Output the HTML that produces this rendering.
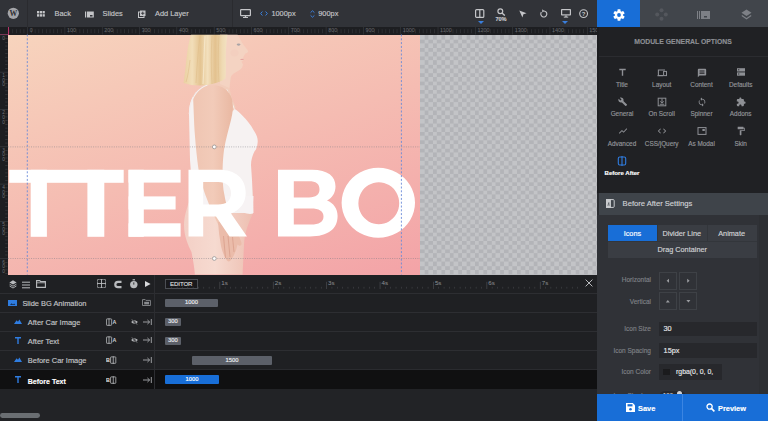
<!DOCTYPE html>
<html><head><meta charset="utf-8">
<style>
*{margin:0;padding:0;box-sizing:border-box}
html,body{width:768px;height:421px;overflow:hidden;background:#222326;font-family:"Liberation Sans",sans-serif;}
.a{position:absolute;display:block}
.t{position:absolute;white-space:nowrap;line-height:1;-webkit-text-stroke:0.15px currentColor}
</style></head><body>
<div class="a" style="left:0px;top:0px;width:597px;height:27px;background:#313338;"></div>
<div class="a" style="left:27px;top:0px;width:1px;height:27px;background:#2a2b2f;"></div>
<div class="a" style="left:232px;top:0px;width:1px;height:27px;background:#2a2b2f;"></div>
<svg class="a" style="left:7px;top:7px" width="13" height="13" viewBox="0 0 13 13">
<circle cx="6.3" cy="6.3" r="5.6" fill="#a4a5a9"/>
<text x="6.3" y="9.4" font-family="Liberation Serif" font-weight="700" font-size="8.6" fill="#2e2f33" text-anchor="middle" transform="translate(6.3 0) scale(0.9 1) translate(-6.3 0)">W</text></svg>
<svg class="a" style="left:37px;top:11px" width="8" height="6" viewBox="0 0 8 6" fill="#c4c5c8">
<rect x="0" y="0" width="2.2" height="2.4"/><rect x="2.8" y="0" width="2.2" height="2.4"/><rect x="5.6" y="0" width="2.2" height="2.4"/>
<rect x="0" y="3.2" width="2.2" height="2.4"/><rect x="2.8" y="3.2" width="2.2" height="2.4"/><rect x="5.6" y="3.2" width="2.2" height="2.4"/></svg>
<div class="t" style="left:54.5px;top:9.94px;font-size:7.4px;color:#c4c5c8;font-weight:400;">Back</div>
<svg class="a" style="left:84.5px;top:10.5px" width="9" height="7" viewBox="0 0 9 7" fill="#c4c5c8">
<rect x="0" y="0.5" width="1" height="6"/><rect x="1.8" y="0.5" width="7" height="6"/><rect x="5" y="4" width="2.5" height="1.5" fill="#313338"/></svg>
<div class="t" style="left:102.6px;top:9.94px;font-size:7.4px;color:#c4c5c8;font-weight:400;">Slides</div>
<svg class="a" style="left:137.5px;top:9.5px" width="8" height="8" viewBox="0 0 8 8">
<rect x="0.5" y="2" width="5.5" height="5.5" fill="none" stroke="#c4c5c8" stroke-width="1"/>
<rect x="2" y="0.5" width="5.5" height="5.5" fill="#c4c5c8"/>
<path d="M4.75 1.6v3.3M3.1 3.25h3.3" stroke="#313338" stroke-width="0.9"/></svg>
<div class="t" style="left:155px;top:9.94px;font-size:7.4px;color:#c4c5c8;font-weight:400;">Add Layer</div>
<svg class="a" style="left:240px;top:9px" width="11" height="9" viewBox="0 0 11 9">
<rect x="0.6" y="0.6" width="9.8" height="6" rx="0.6" fill="none" stroke="#c4c5c8" stroke-width="1.2"/>
<rect x="4.8" y="6.6" width="1.4" height="1.6" fill="#c4c5c8"/><rect x="3" y="8" width="5" height="1" fill="#c4c5c8"/></svg>
<svg class="a" style="left:260px;top:11.2px" width="8" height="5" viewBox="0 0 8 5">
<path d="M2.4 0.5L0.7 2.5l1.7 2M5.6 0.5L7.3 2.5l-1.7 2" fill="none" stroke="#3a7fdc" stroke-width="1"/></svg>
<div class="t" style="left:271.4px;top:9.94px;font-size:7.4px;color:#c4c5c8;font-weight:400;">1000px</div>
<svg class="a" style="left:310px;top:9.5px" width="5" height="8" viewBox="0 0 5 8">
<path d="M0.6 2.6L2.5 0.8l1.9 1.8M0.6 5.4L2.5 7.2l1.9-1.8" fill="none" stroke="#3a7fdc" stroke-width="1"/></svg>
<div class="t" style="left:318.2px;top:9.94px;font-size:7.4px;color:#c4c5c8;font-weight:400;">900px</div>
<svg class="a" style="left:475px;top:9px" width="10" height="9" viewBox="0 0 10 9">
<rect x="0.6" y="0.6" width="8.2" height="7.8" rx="1" fill="none" stroke="#c4c5c8" stroke-width="1.2"/>
<rect x="4.2" y="0" width="1.2" height="9" fill="#c4c5c8"/></svg>
<svg class="a" style="left:478px;top:21px" width="6" height="3" viewBox="0 0 6 3"><path d="M0 0h6L3 3z" fill="#3a7fdc"/></svg>
<svg class="a" style="left:497px;top:7.5px" width="9" height="8" viewBox="0 0 9 8">
<circle cx="3.3" cy="3.3" r="2.4" fill="none" stroke="#c4c5c8" stroke-width="1.2"/><path d="M5 5l2.8 2.6" stroke="#c4c5c8" stroke-width="1.4"/></svg>
<div class="t" style="left:501px;transform:translateX(-50%);top:16.86px;font-size:5.6px;color:#c4c5c8;font-weight:700;">70%</div>
<svg class="a" style="left:519px;top:10px" width="8" height="8" viewBox="0 0 8 8"><path d="M0.3 0.5L7.6 3.3 4.4 4.3 3.4 7.6z" fill="#c4c5c8"/></svg>
<svg class="a" style="left:540px;top:9px" width="8" height="9" viewBox="0 0 8 9">
<path d="M1.4 3.2A3 3 0 1 0 3.9 2" fill="none" stroke="#c4c5c8" stroke-width="1.1"/><path d="M2.2 0.3L4.4 2 2.3 3.6z" fill="#c4c5c8"/></svg>
<svg class="a" style="left:560.5px;top:9px" width="10" height="9" viewBox="0 0 10 9">
<rect x="0" y="0" width="10" height="6.5" rx="0.8" fill="#c4c5c8"/><rect x="1.2" y="1.2" width="7.6" height="4.1" fill="#313338"/>
<rect x="4.3" y="6.5" width="1.4" height="1.4" fill="#c4c5c8"/><rect x="2.8" y="7.6" width="4.4" height="1" fill="#c4c5c8"/></svg>
<svg class="a" style="left:562px;top:21px" width="6" height="3" viewBox="0 0 6 3"><path d="M0 0h6L3 3z" fill="#3a7fdc"/></svg>
<svg class="a" style="left:579px;top:8.5px" width="10" height="10" viewBox="0 0 10 10">
<circle cx="4.6" cy="4.6" r="3.9" fill="none" stroke="#c4c5c8" stroke-width="1.1"/>
<text x="4.6" y="6.9" font-family="Liberation Sans" font-weight="700" font-size="6" fill="#c4c5c8" text-anchor="middle">?</text></svg>
<div class="a" style="left:597px;top:0px;width:43px;height:27px;background:#186ed7;"></div>
<div class="a" style="left:640px;top:0px;width:128px;height:27px;background:#41454b;"></div>
<svg class="a" style="left:612.5px;top:8.6px" width="12" height="12" viewBox="-6 -6 12 12">
<g fill="#fff"><rect x="-1.5" y="-5.7" width="3" height="3" rx="0.4" transform="rotate(0)"/><rect x="-1.5" y="-5.7" width="3" height="3" rx="0.4" transform="rotate(60)"/><rect x="-1.5" y="-5.7" width="3" height="3" rx="0.4" transform="rotate(120)"/><rect x="-1.5" y="-5.7" width="3" height="3" rx="0.4" transform="rotate(180)"/><rect x="-1.5" y="-5.7" width="3" height="3" rx="0.4" transform="rotate(240)"/><rect x="-1.5" y="-5.7" width="3" height="3" rx="0.4" transform="rotate(300)"/>
<circle r="4.1"/></g><circle r="1.9" fill="#186ed7"/></svg>
<svg class="a" style="left:655px;top:8px" width="13" height="13" viewBox="0 0 13 13" fill="#54575d">
<circle cx="6.5" cy="2.2" r="2"/><circle cx="6.5" cy="10.8" r="2"/><circle cx="2.2" cy="6.5" r="2"/><circle cx="10.8" cy="6.5" r="2"/></svg>
<svg class="a" style="left:697px;top:10.5px" width="13" height="8" viewBox="0 0 13 8" fill="#7d8086">
<rect x="0" y="0" width="1" height="8"/><rect x="2" y="0" width="1" height="8"/><rect x="4" y="0" width="9" height="8"/>
<rect x="7" y="5" width="3" height="1.5" fill="#41454b"/></svg>
<svg class="a" style="left:741px;top:8.5px" width="11" height="12" viewBox="0 0 11 12">
<path d="M5.5 0.5L10.5 3.8 5.5 7.1 0.5 3.8z" fill="#7d8086"/><path d="M0.8 6.6L5.5 9.7 10.2 6.6" fill="none" stroke="#7d8086" stroke-width="1.2"/></svg>
<div class="a" style="left:0px;top:27px;width:597px;height:7.5px;background:#1d1e21;"></div>
<svg class="a" style="left:0;top:27px" width="597" height="8" viewBox="0 0 597 8"><rect x="8.64" y="2.2" width="0.7" height="4" fill="#35373b"/><rect x="12.38" y="2.2" width="0.7" height="4" fill="#35373b"/><rect x="16.11" y="2.2" width="0.7" height="4" fill="#35373b"/><rect x="19.84" y="2.2" width="0.7" height="4" fill="#35373b"/><rect x="23.57" y="2.2" width="0.7" height="4" fill="#35373b"/><rect x="27.30" y="0" width="0.6" height="7.5" fill="#3a3c40"/><rect x="31.03" y="2.2" width="0.7" height="4" fill="#35373b"/><rect x="34.76" y="2.2" width="0.7" height="4" fill="#35373b"/><rect x="38.49" y="2.2" width="0.7" height="4" fill="#35373b"/><rect x="42.22" y="2.2" width="0.7" height="4" fill="#35373b"/><rect x="45.95" y="2.2" width="0.7" height="4" fill="#35373b"/><rect x="49.69" y="2.2" width="0.7" height="4" fill="#35373b"/><rect x="53.42" y="2.2" width="0.7" height="4" fill="#35373b"/><rect x="57.15" y="2.2" width="0.7" height="4" fill="#35373b"/><rect x="60.88" y="2.2" width="0.7" height="4" fill="#35373b"/><rect x="64.61" y="0" width="0.6" height="7.5" fill="#3a3c40"/><rect x="68.34" y="2.2" width="0.7" height="4" fill="#35373b"/><rect x="72.07" y="2.2" width="0.7" height="4" fill="#35373b"/><rect x="75.80" y="2.2" width="0.7" height="4" fill="#35373b"/><rect x="79.53" y="2.2" width="0.7" height="4" fill="#35373b"/><rect x="83.27" y="2.2" width="0.7" height="4" fill="#35373b"/><rect x="87.00" y="2.2" width="0.7" height="4" fill="#35373b"/><rect x="90.73" y="2.2" width="0.7" height="4" fill="#35373b"/><rect x="94.46" y="2.2" width="0.7" height="4" fill="#35373b"/><rect x="98.19" y="2.2" width="0.7" height="4" fill="#35373b"/><rect x="101.92" y="0" width="0.6" height="7.5" fill="#3a3c40"/><rect x="105.65" y="2.2" width="0.7" height="4" fill="#35373b"/><rect x="109.38" y="2.2" width="0.7" height="4" fill="#35373b"/><rect x="113.11" y="2.2" width="0.7" height="4" fill="#35373b"/><rect x="116.84" y="2.2" width="0.7" height="4" fill="#35373b"/><rect x="120.57" y="2.2" width="0.7" height="4" fill="#35373b"/><rect x="124.31" y="2.2" width="0.7" height="4" fill="#35373b"/><rect x="128.04" y="2.2" width="0.7" height="4" fill="#35373b"/><rect x="131.77" y="2.2" width="0.7" height="4" fill="#35373b"/><rect x="135.50" y="2.2" width="0.7" height="4" fill="#35373b"/><rect x="139.23" y="0" width="0.6" height="7.5" fill="#3a3c40"/><rect x="142.96" y="2.2" width="0.7" height="4" fill="#35373b"/><rect x="146.69" y="2.2" width="0.7" height="4" fill="#35373b"/><rect x="150.42" y="2.2" width="0.7" height="4" fill="#35373b"/><rect x="154.15" y="2.2" width="0.7" height="4" fill="#35373b"/><rect x="157.89" y="2.2" width="0.7" height="4" fill="#35373b"/><rect x="161.62" y="2.2" width="0.7" height="4" fill="#35373b"/><rect x="165.35" y="2.2" width="0.7" height="4" fill="#35373b"/><rect x="169.08" y="2.2" width="0.7" height="4" fill="#35373b"/><rect x="172.81" y="2.2" width="0.7" height="4" fill="#35373b"/><rect x="176.54" y="0" width="0.6" height="7.5" fill="#3a3c40"/><rect x="180.27" y="2.2" width="0.7" height="4" fill="#35373b"/><rect x="184.00" y="2.2" width="0.7" height="4" fill="#35373b"/><rect x="187.73" y="2.2" width="0.7" height="4" fill="#35373b"/><rect x="191.46" y="2.2" width="0.7" height="4" fill="#35373b"/><rect x="195.19" y="2.2" width="0.7" height="4" fill="#35373b"/><rect x="198.93" y="2.2" width="0.7" height="4" fill="#35373b"/><rect x="202.66" y="2.2" width="0.7" height="4" fill="#35373b"/><rect x="206.39" y="2.2" width="0.7" height="4" fill="#35373b"/><rect x="210.12" y="2.2" width="0.7" height="4" fill="#35373b"/><rect x="213.85" y="0" width="0.6" height="7.5" fill="#3a3c40"/><rect x="217.58" y="2.2" width="0.7" height="4" fill="#35373b"/><rect x="221.31" y="2.2" width="0.7" height="4" fill="#35373b"/><rect x="225.04" y="2.2" width="0.7" height="4" fill="#35373b"/><rect x="228.77" y="2.2" width="0.7" height="4" fill="#35373b"/><rect x="232.50" y="2.2" width="0.7" height="4" fill="#35373b"/><rect x="236.24" y="2.2" width="0.7" height="4" fill="#35373b"/><rect x="239.97" y="2.2" width="0.7" height="4" fill="#35373b"/><rect x="243.70" y="2.2" width="0.7" height="4" fill="#35373b"/><rect x="247.43" y="2.2" width="0.7" height="4" fill="#35373b"/><rect x="251.16" y="0" width="0.6" height="7.5" fill="#3a3c40"/><rect x="254.89" y="2.2" width="0.7" height="4" fill="#35373b"/><rect x="258.62" y="2.2" width="0.7" height="4" fill="#35373b"/><rect x="262.35" y="2.2" width="0.7" height="4" fill="#35373b"/><rect x="266.08" y="2.2" width="0.7" height="4" fill="#35373b"/><rect x="269.81" y="2.2" width="0.7" height="4" fill="#35373b"/><rect x="273.55" y="2.2" width="0.7" height="4" fill="#35373b"/><rect x="277.28" y="2.2" width="0.7" height="4" fill="#35373b"/><rect x="281.01" y="2.2" width="0.7" height="4" fill="#35373b"/><rect x="284.74" y="2.2" width="0.7" height="4" fill="#35373b"/><rect x="288.47" y="0" width="0.6" height="7.5" fill="#3a3c40"/><rect x="292.20" y="2.2" width="0.7" height="4" fill="#35373b"/><rect x="295.93" y="2.2" width="0.7" height="4" fill="#35373b"/><rect x="299.66" y="2.2" width="0.7" height="4" fill="#35373b"/><rect x="303.39" y="2.2" width="0.7" height="4" fill="#35373b"/><rect x="307.12" y="2.2" width="0.7" height="4" fill="#35373b"/><rect x="310.86" y="2.2" width="0.7" height="4" fill="#35373b"/><rect x="314.59" y="2.2" width="0.7" height="4" fill="#35373b"/><rect x="318.32" y="2.2" width="0.7" height="4" fill="#35373b"/><rect x="322.05" y="2.2" width="0.7" height="4" fill="#35373b"/><rect x="325.78" y="0" width="0.6" height="7.5" fill="#3a3c40"/><rect x="329.51" y="2.2" width="0.7" height="4" fill="#35373b"/><rect x="333.24" y="2.2" width="0.7" height="4" fill="#35373b"/><rect x="336.97" y="2.2" width="0.7" height="4" fill="#35373b"/><rect x="340.70" y="2.2" width="0.7" height="4" fill="#35373b"/><rect x="344.44" y="2.2" width="0.7" height="4" fill="#35373b"/><rect x="348.17" y="2.2" width="0.7" height="4" fill="#35373b"/><rect x="351.90" y="2.2" width="0.7" height="4" fill="#35373b"/><rect x="355.63" y="2.2" width="0.7" height="4" fill="#35373b"/><rect x="359.36" y="2.2" width="0.7" height="4" fill="#35373b"/><rect x="363.09" y="0" width="0.6" height="7.5" fill="#3a3c40"/><rect x="366.82" y="2.2" width="0.7" height="4" fill="#35373b"/><rect x="370.55" y="2.2" width="0.7" height="4" fill="#35373b"/><rect x="374.28" y="2.2" width="0.7" height="4" fill="#35373b"/><rect x="378.01" y="2.2" width="0.7" height="4" fill="#35373b"/><rect x="381.75" y="2.2" width="0.7" height="4" fill="#35373b"/><rect x="385.48" y="2.2" width="0.7" height="4" fill="#35373b"/><rect x="389.21" y="2.2" width="0.7" height="4" fill="#35373b"/><rect x="392.94" y="2.2" width="0.7" height="4" fill="#35373b"/><rect x="396.67" y="2.2" width="0.7" height="4" fill="#35373b"/><rect x="400.40" y="0" width="0.6" height="7.5" fill="#3a3c40"/><rect x="404.13" y="2.2" width="0.7" height="4" fill="#35373b"/><rect x="407.86" y="2.2" width="0.7" height="4" fill="#35373b"/><rect x="411.59" y="2.2" width="0.7" height="4" fill="#35373b"/><rect x="415.32" y="2.2" width="0.7" height="4" fill="#35373b"/><rect x="419.06" y="2.2" width="0.7" height="4" fill="#35373b"/><rect x="422.79" y="2.2" width="0.7" height="4" fill="#35373b"/><rect x="426.52" y="2.2" width="0.7" height="4" fill="#35373b"/><rect x="430.25" y="2.2" width="0.7" height="4" fill="#35373b"/><rect x="433.98" y="2.2" width="0.7" height="4" fill="#35373b"/><rect x="437.71" y="0" width="0.6" height="7.5" fill="#3a3c40"/><rect x="441.44" y="2.2" width="0.7" height="4" fill="#35373b"/><rect x="445.17" y="2.2" width="0.7" height="4" fill="#35373b"/><rect x="448.90" y="2.2" width="0.7" height="4" fill="#35373b"/><rect x="452.63" y="2.2" width="0.7" height="4" fill="#35373b"/><rect x="456.37" y="2.2" width="0.7" height="4" fill="#35373b"/><rect x="460.10" y="2.2" width="0.7" height="4" fill="#35373b"/><rect x="463.83" y="2.2" width="0.7" height="4" fill="#35373b"/><rect x="467.56" y="2.2" width="0.7" height="4" fill="#35373b"/><rect x="471.29" y="2.2" width="0.7" height="4" fill="#35373b"/><rect x="475.02" y="0" width="0.6" height="7.5" fill="#3a3c40"/><rect x="478.75" y="2.2" width="0.7" height="4" fill="#35373b"/><rect x="482.48" y="2.2" width="0.7" height="4" fill="#35373b"/><rect x="486.21" y="2.2" width="0.7" height="4" fill="#35373b"/><rect x="489.94" y="2.2" width="0.7" height="4" fill="#35373b"/><rect x="493.68" y="2.2" width="0.7" height="4" fill="#35373b"/><rect x="497.41" y="2.2" width="0.7" height="4" fill="#35373b"/><rect x="501.14" y="2.2" width="0.7" height="4" fill="#35373b"/><rect x="504.87" y="2.2" width="0.7" height="4" fill="#35373b"/><rect x="508.60" y="2.2" width="0.7" height="4" fill="#35373b"/><rect x="512.33" y="0" width="0.6" height="7.5" fill="#3a3c40"/><rect x="516.06" y="2.2" width="0.7" height="4" fill="#35373b"/><rect x="519.79" y="2.2" width="0.7" height="4" fill="#35373b"/><rect x="523.52" y="2.2" width="0.7" height="4" fill="#35373b"/><rect x="527.25" y="2.2" width="0.7" height="4" fill="#35373b"/><rect x="530.99" y="2.2" width="0.7" height="4" fill="#35373b"/><rect x="534.72" y="2.2" width="0.7" height="4" fill="#35373b"/><rect x="538.45" y="2.2" width="0.7" height="4" fill="#35373b"/><rect x="542.18" y="2.2" width="0.7" height="4" fill="#35373b"/><rect x="545.91" y="2.2" width="0.7" height="4" fill="#35373b"/><rect x="549.64" y="0" width="0.6" height="7.5" fill="#3a3c40"/><rect x="553.37" y="2.2" width="0.7" height="4" fill="#35373b"/><rect x="557.10" y="2.2" width="0.7" height="4" fill="#35373b"/><rect x="560.83" y="2.2" width="0.7" height="4" fill="#35373b"/><rect x="564.56" y="2.2" width="0.7" height="4" fill="#35373b"/><rect x="568.29" y="2.2" width="0.7" height="4" fill="#35373b"/><rect x="572.03" y="2.2" width="0.7" height="4" fill="#35373b"/><rect x="575.76" y="2.2" width="0.7" height="4" fill="#35373b"/><rect x="579.49" y="2.2" width="0.7" height="4" fill="#35373b"/><rect x="583.22" y="2.2" width="0.7" height="4" fill="#35373b"/><rect x="586.95" y="0" width="0.6" height="7.5" fill="#3a3c40"/><rect x="590.68" y="2.2" width="0.7" height="4" fill="#35373b"/><rect x="594.41" y="2.2" width="0.7" height="4" fill="#35373b"/><text x="29.70" y="5.1" font-size="5.4" fill="#66686c" font-family="Liberation Sans">0</text><text x="67.01" y="5.1" font-size="5.4" fill="#66686c" font-family="Liberation Sans">100</text><text x="104.32" y="5.1" font-size="5.4" fill="#66686c" font-family="Liberation Sans">200</text><text x="141.63" y="5.1" font-size="5.4" fill="#66686c" font-family="Liberation Sans">300</text><text x="178.94" y="5.1" font-size="5.4" fill="#66686c" font-family="Liberation Sans">400</text><text x="216.25" y="5.1" font-size="5.4" fill="#66686c" font-family="Liberation Sans">500</text><text x="253.56" y="5.1" font-size="5.4" fill="#66686c" font-family="Liberation Sans">600</text><text x="290.87" y="5.1" font-size="5.4" fill="#66686c" font-family="Liberation Sans">700</text><text x="328.18" y="5.1" font-size="5.4" fill="#66686c" font-family="Liberation Sans">800</text><text x="365.49" y="5.1" font-size="5.4" fill="#66686c" font-family="Liberation Sans">900</text><text x="402.80" y="5.1" font-size="5.4" fill="#66686c" font-family="Liberation Sans">1000</text><text x="440.11" y="5.1" font-size="5.4" fill="#66686c" font-family="Liberation Sans">1100</text><text x="477.42" y="5.1" font-size="5.4" fill="#66686c" font-family="Liberation Sans">1200</text><text x="514.73" y="5.1" font-size="5.4" fill="#66686c" font-family="Liberation Sans">1300</text><text x="552.04" y="5.1" font-size="5.4" fill="#66686c" font-family="Liberation Sans">1400</text><text x="589.35" y="5.1" font-size="5.4" fill="#66686c" font-family="Liberation Sans">1500</text></svg>
<div class="a" style="left:8px;top:27px;width:1px;height:8px;background:#b8336a;"></div>
<div class="a" style="left:0px;top:34px;width:8px;height:1px;background:#b8336a;"></div>
<div class="a" style="left:0px;top:35px;width:8px;height:240px;background:#1d1e21;"></div>
<svg class="a" style="left:0;top:0" width="8" height="275"><rect x="0" y="34.50" width="8" height="0.7" fill="#3c3e42"/><text x="2.2" y="39.70" font-size="4.8" fill="#6e7075" font-family="Liberation Sans">0</text><rect x="5.2" y="38.23" width="2.4" height="0.7" fill="#3c3e42"/><rect x="5.2" y="41.96" width="2.4" height="0.7" fill="#3c3e42"/><rect x="5.2" y="45.69" width="2.4" height="0.7" fill="#3c3e42"/><rect x="5.2" y="49.42" width="2.4" height="0.7" fill="#3c3e42"/><rect x="5.2" y="53.16" width="2.4" height="0.7" fill="#3c3e42"/><rect x="5.2" y="56.89" width="2.4" height="0.7" fill="#3c3e42"/><rect x="5.2" y="60.62" width="2.4" height="0.7" fill="#3c3e42"/><rect x="5.2" y="64.35" width="2.4" height="0.7" fill="#3c3e42"/><rect x="5.2" y="68.08" width="2.4" height="0.7" fill="#3c3e42"/><rect x="0" y="71.81" width="8" height="0.7" fill="#3c3e42"/><text x="2.2" y="77.01" font-size="4.8" fill="#6e7075" font-family="Liberation Sans">1</text><text x="2.2" y="81.61" font-size="4.8" fill="#6e7075" font-family="Liberation Sans">0</text><text x="2.2" y="86.21" font-size="4.8" fill="#6e7075" font-family="Liberation Sans">0</text><rect x="5.2" y="75.54" width="2.4" height="0.7" fill="#3c3e42"/><rect x="5.2" y="79.27" width="2.4" height="0.7" fill="#3c3e42"/><rect x="5.2" y="83.00" width="2.4" height="0.7" fill="#3c3e42"/><rect x="5.2" y="86.73" width="2.4" height="0.7" fill="#3c3e42"/><rect x="5.2" y="90.47" width="2.4" height="0.7" fill="#3c3e42"/><rect x="5.2" y="94.20" width="2.4" height="0.7" fill="#3c3e42"/><rect x="5.2" y="97.93" width="2.4" height="0.7" fill="#3c3e42"/><rect x="5.2" y="101.66" width="2.4" height="0.7" fill="#3c3e42"/><rect x="5.2" y="105.39" width="2.4" height="0.7" fill="#3c3e42"/><rect x="0" y="109.12" width="8" height="0.7" fill="#3c3e42"/><text x="2.2" y="114.32" font-size="4.8" fill="#6e7075" font-family="Liberation Sans">2</text><text x="2.2" y="118.92" font-size="4.8" fill="#6e7075" font-family="Liberation Sans">0</text><text x="2.2" y="123.52" font-size="4.8" fill="#6e7075" font-family="Liberation Sans">0</text><rect x="5.2" y="112.85" width="2.4" height="0.7" fill="#3c3e42"/><rect x="5.2" y="116.58" width="2.4" height="0.7" fill="#3c3e42"/><rect x="5.2" y="120.31" width="2.4" height="0.7" fill="#3c3e42"/><rect x="5.2" y="124.04" width="2.4" height="0.7" fill="#3c3e42"/><rect x="5.2" y="127.77" width="2.4" height="0.7" fill="#3c3e42"/><rect x="5.2" y="131.51" width="2.4" height="0.7" fill="#3c3e42"/><rect x="5.2" y="135.24" width="2.4" height="0.7" fill="#3c3e42"/><rect x="5.2" y="138.97" width="2.4" height="0.7" fill="#3c3e42"/><rect x="5.2" y="142.70" width="2.4" height="0.7" fill="#3c3e42"/><rect x="0" y="146.43" width="8" height="0.7" fill="#3c3e42"/><text x="2.2" y="151.63" font-size="4.8" fill="#6e7075" font-family="Liberation Sans">3</text><text x="2.2" y="156.23" font-size="4.8" fill="#6e7075" font-family="Liberation Sans">0</text><text x="2.2" y="160.83" font-size="4.8" fill="#6e7075" font-family="Liberation Sans">0</text><rect x="5.2" y="150.16" width="2.4" height="0.7" fill="#3c3e42"/><rect x="5.2" y="153.89" width="2.4" height="0.7" fill="#3c3e42"/><rect x="5.2" y="157.62" width="2.4" height="0.7" fill="#3c3e42"/><rect x="5.2" y="161.35" width="2.4" height="0.7" fill="#3c3e42"/><rect x="5.2" y="165.09" width="2.4" height="0.7" fill="#3c3e42"/><rect x="5.2" y="168.82" width="2.4" height="0.7" fill="#3c3e42"/><rect x="5.2" y="172.55" width="2.4" height="0.7" fill="#3c3e42"/><rect x="5.2" y="176.28" width="2.4" height="0.7" fill="#3c3e42"/><rect x="5.2" y="180.01" width="2.4" height="0.7" fill="#3c3e42"/><rect x="0" y="183.74" width="8" height="0.7" fill="#3c3e42"/><text x="2.2" y="188.94" font-size="4.8" fill="#6e7075" font-family="Liberation Sans">4</text><text x="2.2" y="193.54" font-size="4.8" fill="#6e7075" font-family="Liberation Sans">0</text><text x="2.2" y="198.14" font-size="4.8" fill="#6e7075" font-family="Liberation Sans">0</text><rect x="5.2" y="187.47" width="2.4" height="0.7" fill="#3c3e42"/><rect x="5.2" y="191.20" width="2.4" height="0.7" fill="#3c3e42"/><rect x="5.2" y="194.93" width="2.4" height="0.7" fill="#3c3e42"/><rect x="5.2" y="198.66" width="2.4" height="0.7" fill="#3c3e42"/><rect x="5.2" y="202.39" width="2.4" height="0.7" fill="#3c3e42"/><rect x="5.2" y="206.13" width="2.4" height="0.7" fill="#3c3e42"/><rect x="5.2" y="209.86" width="2.4" height="0.7" fill="#3c3e42"/><rect x="5.2" y="213.59" width="2.4" height="0.7" fill="#3c3e42"/><rect x="5.2" y="217.32" width="2.4" height="0.7" fill="#3c3e42"/><rect x="0" y="221.05" width="8" height="0.7" fill="#3c3e42"/><text x="2.2" y="226.25" font-size="4.8" fill="#6e7075" font-family="Liberation Sans">5</text><text x="2.2" y="230.85" font-size="4.8" fill="#6e7075" font-family="Liberation Sans">0</text><text x="2.2" y="235.45" font-size="4.8" fill="#6e7075" font-family="Liberation Sans">0</text><rect x="5.2" y="224.78" width="2.4" height="0.7" fill="#3c3e42"/><rect x="5.2" y="228.51" width="2.4" height="0.7" fill="#3c3e42"/><rect x="5.2" y="232.24" width="2.4" height="0.7" fill="#3c3e42"/><rect x="5.2" y="235.97" width="2.4" height="0.7" fill="#3c3e42"/><rect x="5.2" y="239.70" width="2.4" height="0.7" fill="#3c3e42"/><rect x="5.2" y="243.44" width="2.4" height="0.7" fill="#3c3e42"/><rect x="5.2" y="247.17" width="2.4" height="0.7" fill="#3c3e42"/><rect x="5.2" y="250.90" width="2.4" height="0.7" fill="#3c3e42"/><rect x="5.2" y="254.63" width="2.4" height="0.7" fill="#3c3e42"/><rect x="0" y="258.36" width="8" height="0.7" fill="#3c3e42"/><text x="2.2" y="263.56" font-size="4.8" fill="#6e7075" font-family="Liberation Sans">6</text><text x="2.2" y="268.16" font-size="4.8" fill="#6e7075" font-family="Liberation Sans">0</text><text x="2.2" y="272.76" font-size="4.8" fill="#6e7075" font-family="Liberation Sans">0</text><rect x="5.2" y="262.09" width="2.4" height="0.7" fill="#3c3e42"/><rect x="5.2" y="265.82" width="2.4" height="0.7" fill="#3c3e42"/><rect x="5.2" y="269.55" width="2.4" height="0.7" fill="#3c3e42"/><rect x="5.2" y="273.28" width="2.4" height="0.7" fill="#3c3e42"/></svg>
<div class="a" style="left:8px;top:34.5px;width:412px;height:240px;background:linear-gradient(161deg,#f7d4bd 0%,#f5bcb2 50%,#f3a3a7 100%);"></div>
<div class="a" style="left:420px;top:34.5px;width:177px;height:240px;background:conic-gradient(#b3b4b8 25%,#c3c4c7 0 50%,#b3b4b8 0 75%,#c3c4c7 0) 0 0/8.4px 8.4px;"></div>
<svg class="a" style="left:0;top:0" width="597" height="275" viewBox="0 0 597 275">
<defs>
<clipPath id="cv"><rect x="8" y="34.5" width="412" height="240"/></clipPath>
<linearGradient id="hairG" x1="0" y1="0" x2="1" y2="0">
<stop offset="0" stop-color="#ebd0a2"/><stop offset="0.2" stop-color="#f2deb9"/><stop offset="0.38" stop-color="#e4c491"/><stop offset="0.55" stop-color="#f3e0bd"/><stop offset="0.72" stop-color="#e3c18e"/><stop offset="0.88" stop-color="#efdab3"/><stop offset="1" stop-color="#f3e2c4"/></linearGradient>
<linearGradient id="skinG" x1="0" y1="0" x2="1" y2="0">
<stop offset="0" stop-color="#efc5b2"/><stop offset="0.5" stop-color="#f2cbb9"/><stop offset="1" stop-color="#e9b8a2"/></linearGradient>
<linearGradient id="legG" x1="0" y1="0" x2="1" y2="0">
<stop offset="0" stop-color="#f3d0c6"/><stop offset="0.45" stop-color="#f6dad0"/><stop offset="1" stop-color="#edbfb1"/></linearGradient>
</defs>
<g clip-path="url(#cv)">
<!-- legs / buttock -->
<path d="M193 190 C188 205 184 215 184 225 C184 236 188 245 191.5 252 C193 260 194.5 268 195 276 L242.5 276 C243 266 243.5 255 244 245 C244.5 232 249 222 253 213 L253 190 Z" fill="url(#legG)"/>
<!-- tank top -->
<path d="M189 114 C189 105 191 98 196 92 L228 90 L234 108.5 C238 111 240 113 242.3 115.6 C247 120.5 251 125 253.5 130 C256.5 134.5 258 138 257.7 142 C257.3 147 256 150 254.7 151 C252.5 155 251 160 251 165 L252 180 L253.5 213 L200 213 L193 200 L190 160 Z" fill="#f6f2f2"/>
<!-- underwear -->
<path d="M200 196 L253.5 196 L253 213.5 C248 215 242 212 238 210.2 L202 212 Z" fill="#f7f3f4"/>
<!-- neck / chest skin -->
<path d="M200 86 L226 78 L231 77 L229.5 88 L231.6 97.8 L235.8 107.3 L234 109.7 C230 114 226 117 222 118 L205 100 Z" fill="#f2cdbb"/>
<path d="M226.9 89.5 L234.3 108.8" stroke="#f7eeea" stroke-width="1"/>
<!-- arm -->
<path d="M193 96 C198 89 204 85.5 212 85 C222 85 229 90 232 99 C233.5 106 233 112 231 120 C228.5 130 225.5 140 224 150 C222.5 162 222 175 223.5 190 C225.5 203 229 215 233 225 L218.4 225 C212 212 206 198 201 182 C198 170 196 150 194.5 130 C193.8 115 193.5 105 193 96 Z" fill="url(#skinG)"/>
<!-- hand -->
<path d="M218 222 L233 222 C236 228 239 236 241.6 243 C241.8 246 239.5 246.5 237.5 244.5 C236.5 250 234 256 231 260 C229.5 262 227.5 262 226 259 C223.5 255 222 250 221 246 C219.5 238 218.5 230 218 222 Z" fill="#ebbcaa"/>
<path d="M223.5 236 L225.5 258 M228 236 L230 257 M232.5 237 L234 252" stroke="#d99e8c" stroke-width="0.8" fill="none"/>
<!-- strap -->
<path d="M207.3 85 C199 88 193 95 190.3 106 L189.3 114" fill="none" stroke="#f4eeee" stroke-width="1.2"/>
<!-- face -->
<path d="M220 34.5 L237.5 34.5 C239 37 240.5 39.5 241.4 41.6 C242.5 43.5 243.5 45 244.3 46 C246 48 247.8 50 248.2 51.6 C247.5 53 246.3 53.3 245.4 53.5 C244.5 55 243.5 56.5 243.2 57.3 C243.5 58.5 243.7 59 243.7 59.4 C243 60.5 241.5 61.3 241.4 61.8 C242.3 63 243 64 242.9 65.2 C242.3 67.5 241 69.5 238 71 C235 72.5 232 74 230.5 77.5 L229.4 88 L220 84 Z" fill="#f4d3c2"/>
<ellipse cx="238.6" cy="44.6" rx="1.9" ry="1.1" fill="#a9a4a6"/><ellipse cx="234.5" cy="53" rx="4" ry="3.5" fill="#eec3b6" opacity="0.2"/>
<path d="M240.5 59.5 L243.6 59.3" stroke="#e4a5a0" stroke-width="1.2"/>
<!-- hair -->
<path d="M191 34.5 L227.5 34.5 C226.5 42 225.8 50 225.8 56 C225.8 64 226.3 72 225.5 78.5 C222 81.5 214 84 206.5 85 C199 86 191 85.5 183.5 83 C184.5 76 185.5 68 186.5 58 C187.5 49 189 41 191 34.5 Z" fill="url(#hairG)"/>
<path d="M200 36 C198 50 197 66 196 83 M212 36 C211 52 211 68 212 84 M219 36 C218 50 218 66 219 82 M190 60 C189 68 188 76 186 82" stroke="#dfbd88" stroke-width="0.8" fill="none" opacity="0.7"/>
<path d="M205 36 C204 52 204 68 203 84" stroke="#f8ebd0" stroke-width="1.2" fill="none" opacity="0.7"/>
</g>
<!-- big text -->
<g fill="#ffffff" clip-path="url(#cv)">
<rect x="9.2" y="169.8" width="114.5" height="13"/>
<rect x="30.7" y="169.8" width="16.2" height="67"/>
<rect x="87.4" y="169.8" width="16.9" height="67"/>
<rect x="128.5" y="169.8" width="15.3" height="67"/>
<rect x="128.5" y="169.8" width="52.1" height="12.8"/>
<rect x="128.5" y="196.4" width="47.1" height="13.1"/>
<rect x="128.5" y="223.3" width="52.1" height="13.3"/>
<path d="M188.5 169.8 H219 C235 169.8 245.7 178 245.7 193 C245.7 203 240 210 231 213.5 L247 236.6 H229.5 L216 216.5 H203.2 V236.6 H188.5 Z M203.2 182 V204.5 H218 C226.5 204.5 231 200.5 231 193.2 C231 186 226.5 182 218 182 Z" fill-rule="evenodd"/>
<path d="M278 169.8 H312 C328 169.8 335.5 176.5 335.5 186.5 C335.5 193 332 198 327 200.5 C333.5 203 337.6 208.5 337.6 216 C337.6 229 328 236.4 310 236.4 H278 Z M293.8 181.2 V197.4 H309 C316 197.4 319.5 194.8 319.5 189.3 C319.5 183.8 316 181.2 309 181.2 Z M293.8 208.5 V224.6 H311 C319 224.6 323.5 222 323.5 216.5 C323.5 211 319 208.5 311 208.5 Z" fill-rule="evenodd"/>
<path d="M378.3 167.7 A36.7 35 0 1 0 378.31 167.7 Z M378.8 182.2 A20.4 21 0 1 1 378.79 182.2 Z" fill-rule="evenodd"/>
</g>
<!-- guides -->
<line x1="27.3" y1="34.5" x2="27.3" y2="274.5" stroke="#6a8ad8" stroke-width="0.9" stroke-dasharray="2 1.8"/>
<line x1="401.4" y1="34.5" x2="401.4" y2="274.5" stroke="#6a8ad8" stroke-width="0.9" stroke-dasharray="2 1.8"/>
<line x1="8" y1="146.9" x2="420" y2="146.9" stroke="#7b7b82" stroke-opacity="0.7" stroke-width="0.7" stroke-dasharray="1 1.3"/>
<line x1="8" y1="258.5" x2="420" y2="258.5" stroke="#7b7b82" stroke-opacity="0.7" stroke-width="0.7" stroke-dasharray="1 1.3"/>
<circle cx="214.3" cy="146.9" r="1.9" fill="#fff" stroke="#888" stroke-width="0.7"/>
<circle cx="214.3" cy="258.5" r="1.9" fill="#fff" stroke="#888" stroke-width="0.7"/>
</svg>
<div class="a" style="left:597px;top:27px;width:171px;height:394px;background:#303237;"></div>
<div class="a" style="left:597px;top:27px;width:171px;height:166px;background:#202124;"></div>
<div class="a" style="left:597px;top:27px;width:2px;height:166px;background:#1c1d20;"></div>
<div class="t" style="left:682.5px;top:37.6px;font-size:7.7px;color:#8d8f94;font-weight:700;transform:translateX(-50%) scaleX(0.89)">MODULE GENERAL OPTIONS</div>
<div class="a" style="left:599px;top:56px;width:169px;height:1px;background:#2b2c30;"></div>
<div class="t" style="left:622px;transform:translateX(-50%);top:81.78px;font-size:6.4px;color:#939599;font-weight:400;">Title</div>
<div class="t" style="left:661.7px;transform:translateX(-50%);top:81.78px;font-size:6.4px;color:#939599;font-weight:400;">Layout</div>
<div class="t" style="left:701.5px;transform:translateX(-50%);top:81.78px;font-size:6.4px;color:#939599;font-weight:400;">Content</div>
<div class="t" style="left:740.7px;transform:translateX(-50%);top:81.78px;font-size:6.4px;color:#939599;font-weight:400;">Defaults</div>
<div class="t" style="left:622px;transform:translateX(-50%);top:111.18px;font-size:6.4px;color:#939599;font-weight:400;">General</div>
<div class="t" style="left:661.7px;transform:translateX(-50%);top:111.18px;font-size:6.4px;color:#939599;font-weight:400;">On Scroll</div>
<div class="t" style="left:701.5px;transform:translateX(-50%);top:111.18px;font-size:6.4px;color:#939599;font-weight:400;">Spinner</div>
<div class="t" style="left:740.7px;transform:translateX(-50%);top:111.18px;font-size:6.4px;color:#939599;font-weight:400;">Addons</div>
<div class="t" style="left:622px;transform:translateX(-50%);top:140.58px;font-size:6.4px;color:#939599;font-weight:400;">Advanced</div>
<div class="t" style="left:661.7px;transform:translateX(-50%);top:140.58px;font-size:6.4px;color:#939599;font-weight:400;">CSS/jQuery</div>
<div class="t" style="left:701.5px;transform:translateX(-50%);top:140.58px;font-size:6.4px;color:#939599;font-weight:400;">As Modal</div>
<div class="t" style="left:740.7px;transform:translateX(-50%);top:140.58px;font-size:6.4px;color:#939599;font-weight:400;">Skin</div>
<div class="t" style="left:622px;transform:translateX(-50%);top:170.04px;font-size:6.1px;color:#ffffff;font-weight:700;">Before After</div>
<svg class="a" style="left:617.00px;top:66.90px" width="11" height="11" viewBox="0 0 24 24"><path d="M5 4v3h5.5v12h3V7H19V4z" fill="#8e9095"/></svg>
<svg class="a" style="left:655.7px;top:66.8px" width="12" height="12" viewBox="-6.0 -6.0 12 12"><path d="M-4.5 2.6H1.2M-3.6 2.2V-3H3" fill="none" stroke="#8e9095" stroke-width="1.1"/><rect x="1.6" y="-1.6" width="2.9" height="4.2" fill="none" stroke="#8e9095" stroke-width="1"/></svg>
<svg class="a" style="left:696.50px;top:67.60px" width="10" height="10" viewBox="0 0 24 24"><path d="M20 2H4c-1.1 0-1.99.9-1.99 2L2 22l4-4h14c1.1 0 2-.9 2-2V4c0-1.1-.9-2-2-2zm-2 12H6v-2h12v2zm0-3H6V9h12v2zm0-3H6V6h12v2z" fill="#8e9095"/></svg>
<svg class="a" style="left:734.7px;top:66.4px" width="12" height="12" viewBox="-6.0 -6.0 12 12"><rect x="-4" y="-3.8" width="8" height="3.3" fill="#8e9095"/><rect x="-4" y="0.4" width="8" height="3.3" fill="#8e9095"/><rect x="-2.9" y="-2.7" width="1.2" height="1" fill="#202124"/><rect x="-2.9" y="1.5" width="1.2" height="1" fill="#202124"/></svg>
<svg class="a" style="left:617.55px;top:97.15px" width="9.5" height="9.5" viewBox="0 0 24 24"><path d="M22.7 19l-9.1-9.1c.9-2.3.4-5-1.5-6.9-2-2-5-2.4-7.4-1.3L9 6 6 9 1.6 4.7C.4 7.1.9 10.1 2.9 12.1c1.9 1.9 4.6 2.4 6.9 1.5l9.1 9.1c.4.4 1 .4 1.4 0l2.3-2.3c.5-.4.5-1.1.1-1.4z" fill="#8e9095"/></svg>
<svg class="a" style="left:655.7px;top:95.8px" width="12" height="12" viewBox="-6.0 -6.0 12 12"><rect x="-3.8" y="-3.8" width="7.6" height="7.6" fill="none" stroke="#8e9095" stroke-width="1"/><path d="M0 -3.4V0.6M-1.6 -0.6L0 1.2L1.6 -0.6" fill="none" stroke="#8e9095" stroke-width="1"/><rect x="-2.3" y="1.8" width="4.6" height="0.9" fill="#8e9095"/></svg>
<svg class="a" style="left:696.50px;top:96.80px" width="10" height="10" viewBox="0 0 24 24"><path d="M12 4V1L8 5l4 4V6c3.31 0 6 2.69 6 6 0 1.01-.25 1.97-.7 2.8l1.46 1.46C19.54 15.03 20 13.57 20 12c0-4.42-3.58-8-8-8zm0 14c-3.31 0-6-2.69-6-6 0-1.01.25-1.970.7-2.8L5.24 7.740C4.46 8.97 4 10.43 4 12c0 4.42 3.58 8 8 8v3l4-4-4-4v3z" fill="#8e9095"/></svg>
<svg class="a" style="left:735.70px;top:96.60px" width="10" height="10" viewBox="0 0 24 24"><path d="M20.5 11H19V7c0-1.1-.9-2-2-2h-4V3.5C13 2.12 11.88 1 10.5 1S8 2.12 8 3.5V5H4c-1.1 0-1.99.9-1.990 2v3.8H3.5c1.49 0 2.7 1.21 2.7 2.7s-1.21 2.7-2.7 2.7H2V20c0 1.1.9 2 2 2h3.8v-1.5c0-1.49 1.21-2.7 2.7-2.7 1.49 0 2.7 1.21 2.7 2.7V22H17c1.1 0 2-.9 2-2v-4h1.5c1.38 0 2.5-1.12 2.5-2.5S21.88 11 20.5 11z" fill="#8e9095"/></svg>
<svg class="a" style="left:617.50px;top:126.40px" width="10" height="10" viewBox="0 0 24 24"><path d="M3.5 18.49l6-6.01 4 4L22 6.92l-1.41-1.41-7.09 7.97-4-4L2 16.99z" fill="#8e9095"/></svg>
<svg class="a" style="left:656.90px;top:126.40px" width="10" height="10" viewBox="0 0 24 24"><path d="M9.4 16.6L4.8 12l4.6-4.6L8 6l-6 6 6 6 1.4-1.4zm5.2 0l4.6-4.6-4.6-4.6L16 6l6 6-6 6-1.4-1.4z" fill="#8e9095"/></svg>
<svg class="a" style="left:695.5px;top:125.4px" width="12" height="12" viewBox="-6.0 -6.0 12 12"><rect x="-4" y="-3.4" width="8" height="6.8" fill="none" stroke="#8e9095" stroke-width="1"/><rect x="0.4" y="-2" width="2.4" height="2" fill="#8e9095"/></svg>
<svg class="a" style="left:735.70px;top:126.40px" width="10" height="10" viewBox="0 0 24 24"><path d="M18 4V3c0-.55-.45-1-1-1H5c-.55 0-1 .45-1 1v4c0 .55.45 1 1 1h12c.55 0 1-.45 1-1V6h1v4H9v11c0 .55.45 1 1 1h2c.55 0 1-.45 1-1v-9h8V4h-3z" fill="#8e9095"/></svg>
<svg class="a" style="left:616.0px;top:154.6px" width="12" height="12" viewBox="-6.0 -6.0 12 12"><rect x="-3.7" y="-4" width="7.4" height="8" rx="1.4" fill="none" stroke="#2f7de1" stroke-width="1.1"/><rect x="-0.55" y="-5" width="1.1" height="10" fill="#2f7de1"/></svg>
<div class="a" style="left:597px;top:192.5px;width:171px;height:22px;background:#3f444a;"></div>
<div class="a" style="left:597px;top:192.5px;width:2px;height:22px;background:#2a2c30;"></div>
<svg class="a" style="left:605.5px;top:199px" width="9" height="9" viewBox="0 0 9 9"><rect x="0.6" y="0.6" width="7.6" height="7.8" rx="1" fill="none" stroke="#c9cbce" stroke-width="1"/><rect x="0" y="0" width="4.4" height="9" fill="#c9cbce"/><rect x="3.9" y="0" width="1" height="9" fill="#c9cbce"/><path d="M1.8 6.8L2.8 3.5L3.2 6.8" stroke="#40444b" stroke-width="0.6" fill="none"/></svg>
<div class="t" style="left:622.6px;top:199.77px;font-size:7.6px;color:#d0d2d5;font-weight:400;">Before After Settings</div>
<div class="a" style="left:758.5px;top:214.5px;width:9.5px;height:206.5px;background:#2d2f33;"></div>
<div class="a" style="left:607.8px;top:225px;width:149px;height:32.6px;background:#3a3d43;"></div>
<div class="a" style="left:607.8px;top:225px;width:49.2px;height:16px;background:#186ed7;"></div>
<div class="a" style="left:657px;top:225px;width:1px;height:16px;background:#33363b;"></div>
<div class="a" style="left:706.5px;top:225px;width:1px;height:16px;background:#33363b;"></div>
<div class="a" style="left:607.8px;top:241px;width:149px;height:1px;background:#33363b;"></div>
<div class="t" style="left:632.4px;transform:translateX(-50%);top:230.02px;font-size:7.3px;color:#ffffff;font-weight:400;">Icons</div>
<div class="t" style="left:681.8px;transform:translateX(-50%);top:230.02px;font-size:7.3px;color:#d0d2d5;font-weight:400;">Divider Line</div>
<div class="t" style="left:731.6px;transform:translateX(-50%);top:230.02px;font-size:7.3px;color:#d0d2d5;font-weight:400;">Animate</div>
<div class="t" style="left:682.2px;transform:translateX(-50%);top:246.42px;font-size:7.3px;color:#d0d2d5;font-weight:400;">Drag Container</div>
<div class="t" style="right:117px;top:276.90px;font-size:6.5px;color:#7f8186;font-weight:400;">Horizontal</div>
<div class="t" style="right:117px;top:298.50px;font-size:6.5px;color:#7f8186;font-weight:400;">Vertical</div>
<div class="a" style="left:658.7px;top:271.8px;width:18.2px;height:17.8px;background:transparent;border:1px solid #3e4146"></div>
<svg class="a" style="left:0;top:0" width="768" height="421"><path d="M669.0000000000001 278.7L666.6 280.7L669.0000000000001 282.7Z" fill="#9a9ca0"/></svg>
<div class="a" style="left:679.3px;top:271.8px;width:18.2px;height:17.8px;background:transparent;border:1px solid #3e4146"></div>
<svg class="a" style="left:0;top:0" width="768" height="421"><path d="M687.1999999999999 278.7L689.6 280.7L687.1999999999999 282.7Z" fill="#9a9ca0"/></svg>
<div class="a" style="left:658.7px;top:292.3px;width:18.2px;height:17.8px;background:transparent;border:1px solid #3e4146"></div>
<svg class="a" style="left:0;top:0" width="768" height="421"><path d="M665.8000000000001 302.4L667.8000000000001 300.0L669.8000000000001 302.4Z" fill="#9a9ca0"/></svg>
<div class="a" style="left:679.3px;top:292.3px;width:18.2px;height:17.8px;background:transparent;border:1px solid #3e4146"></div>
<svg class="a" style="left:0;top:0" width="768" height="421"><path d="M686.4 300.0L688.4 302.4L690.4 300.0Z" fill="#9a9ca0"/></svg>
<div class="t" style="right:117px;top:325.80px;font-size:6.5px;color:#7f8186;font-weight:400;">Icon Size</div>
<div class="t" style="right:117px;top:347.50px;font-size:6.5px;color:#7f8186;font-weight:400;">Icon Spacing</div>
<div class="t" style="right:117px;top:369.10px;font-size:6.5px;color:#7f8186;font-weight:400;">Icon Color</div>
<div class="a" style="left:658.6px;top:321.7px;width:98.2px;height:14.6px;background:#27282c;"></div>
<div class="a" style="left:658.6px;top:343.1px;width:98.2px;height:14.7px;background:#27282c;"></div>
<div class="a" style="left:658.6px;top:364px;width:63.6px;height:15.6px;background:#27282c;"></div>
<div class="t" style="left:663.5px;top:325.32px;font-size:7.3px;color:#e6e7e9;font-weight:400;">30</div>
<div class="t" style="left:663.6px;top:346.82px;font-size:7.3px;color:#e6e7e9;font-weight:400;">15px</div>
<div class="a" style="left:662.9px;top:368.6px;width:7.1px;height:6.9px;background:#1b1b1d;"></div>
<div class="t" style="left:676px;top:368.96px;font-size:6.9px;color:#e6e7e9;font-weight:400;">rgba(0, 0, 0,</div>
<div class="t" style="right:117px;top:393.00px;font-size:6.5px;color:#7f8186;font-weight:400;">Icon Shadow</div>
<div class="a" style="left:658.6px;top:390.5px;width:27px;height:12px;background:#27282c;border-radius:6px"></div>
<div class="t" style="left:663px;top:392.42px;font-size:6px;color:#d0d1d4;font-weight:400;">100</div>
<div class="a" style="left:676.5px;top:390.8px;width:5px;height:5px;background:#d0d1d4;border-radius:50%"></div>
<div class="a" style="left:597px;top:393.8px;width:171px;height:27.2px;background:#186ed7;"></div>
<div class="a" style="left:682px;top:393.8px;width:0.8px;height:27.2px;background:#3b85e2;"></div>
<svg class="a" style="left:625.5px;top:402.5px" width="9" height="9" viewBox="0 0 9 9"><path d="M0 0H6.8L9 2.2V9H0Z" fill="#fff"/><rect x="1.5" y="1.2" width="5" height="2.2" fill="#186ed7"/><circle cx="4.5" cy="6.2" r="1.3" fill="#186ed7"/></svg>
<div class="t" style="left:638px;top:404.74px;font-size:7.4px;color:#ffffff;font-weight:700;">Save</div>
<svg class="a" style="left:705.5px;top:402.5px" width="9" height="9" viewBox="0 0 9 9"><circle cx="3.6" cy="3.6" r="2.6" fill="none" stroke="#fff" stroke-width="1.3"/><path d="M5.4 5.4L8.4 8.4" stroke="#fff" stroke-width="1.6"/></svg>
<div class="t" style="left:718px;top:404.74px;font-size:7.4px;color:#ffffff;font-weight:700;">Preview</div>
<div class="a" style="left:0px;top:274.5px;width:597px;height:146.5px;background:#222326;"></div>
<div class="a" style="left:0px;top:274.5px;width:597px;height:114.3px;background:#1f2023;"></div>
<div class="a" style="left:0px;top:292.8px;width:597px;height:1.1px;background:#2d2e32;"></div>
<div class="a" style="left:0px;top:311.8px;width:597px;height:1.1px;background:#2d2e32;"></div>
<div class="a" style="left:0px;top:330.7px;width:597px;height:1.1px;background:#2d2e32;"></div>
<div class="a" style="left:0px;top:350.1px;width:597px;height:1.1px;background:#2d2e32;"></div>
<div class="a" style="left:0px;top:369.9px;width:597px;height:19px;background:#101011;"></div>
<div class="a" style="left:0px;top:369.4px;width:597px;height:0.6px;background:#2a2b2f;"></div>
<div class="a" style="left:154.4px;top:274.5px;width:0.9px;height:114.3px;background:#2c2d31;"></div>
<svg class="a" style="left:9px;top:280px" width="8" height="9" viewBox="0 0 8 9"><path d="M4 0.3L7.6 2.4L4 4.5L0.4 2.4Z" fill="#b9bbbe"/><path d="M0.6 4.2L4 6.2L7.4 4.2M0.6 6L4 8L7.4 6" fill="none" stroke="#b9bbbe" stroke-width="0.9"/></svg>
<svg class="a" style="left:22px;top:280.5px" width="8" height="8" viewBox="0 0 8 8"><path d="M0 1.2H8M0 4H8M0 6.8H8" stroke="#b9bbbe" stroke-width="1"/></svg>
<svg class="a" style="left:35.8px;top:280.3px" width="10" height="8" viewBox="0 0 10 8"><path d="M0.6 0.6H3.8L4.6 1.6H9.4V7.4H0.6Z" fill="none" stroke="#b9bbbe" stroke-width="1.1"/><path d="M0.6 2.8H9.4" stroke="#b9bbbe" stroke-width="0.8"/></svg>
<svg class="a" style="left:97px;top:279px" width="9" height="9" viewBox="0 0 9 9"><rect x="0.5" y="0.5" width="8" height="8" fill="none" stroke="#b9bbbe" stroke-width="0.9" stroke-dasharray="1.2 0.8"/><path d="M4.5 0V9M0 4.5H9" stroke="#b9bbbe" stroke-width="0.9"/></svg>
<svg class="a" style="left:113.3px;top:279.5px" width="9" height="9" viewBox="0 0 9 9"><path d="M8.5 1.8H5A2.7 2.7 0 0 0 5 7.2H8.5" fill="none" stroke="#b9bbbe" stroke-width="2.2"/></svg>
<svg class="a" style="left:128.5px;top:278.5px" width="10" height="10" viewBox="0 0 10 10"><circle cx="4.8" cy="5.6" r="3.7" fill="#b9bbbe"/><rect x="3.6" y="0.2" width="2.4" height="1.2" fill="#b9bbbe"/><path d="M4.8 5.6V3.4" stroke="#212225" stroke-width="0.9"/></svg>
<svg class="a" style="left:144.6px;top:280.6px" width="6" height="6" viewBox="0 0 6 6"><path d="M0 0L5.6 3L0 6Z" fill="#d8d9db"/></svg>
<div class="a" style="left:164.5px;top:279.1px;width:33.3px;height:10.2px;background:#19191c;border:0.8px solid #4b4e54"></div>
<div class="t" style="left:181.2px;transform:translateX(-50%);top:281.44px;font-size:6.1px;color:#dcdddf;font-weight:400;letter-spacing:-0.1px">EDITOR</div>
<svg class="a" style="left:0;top:0" width="597" height="300"><rect x="171.44" y="286.8" width="0.6" height="1.8" fill="#46474b"/><rect x="176.78" y="286.8" width="0.6" height="1.8" fill="#46474b"/><rect x="182.12" y="286.8" width="0.6" height="1.8" fill="#46474b"/><rect x="187.46" y="286.8" width="0.6" height="1.8" fill="#46474b"/><rect x="192.80" y="286.8" width="0.6" height="1.8" fill="#46474b"/><rect x="198.14" y="286.8" width="0.6" height="1.8" fill="#46474b"/><rect x="203.48" y="286.8" width="0.6" height="1.8" fill="#46474b"/><rect x="208.82" y="286.8" width="0.6" height="1.8" fill="#46474b"/><rect x="214.16" y="286.8" width="0.6" height="1.8" fill="#46474b"/><rect x="219.50" y="281.8" width="0.7" height="7.2" fill="#4a4b4f"/><rect x="224.84" y="286.8" width="0.6" height="1.8" fill="#46474b"/><rect x="230.18" y="286.8" width="0.6" height="1.8" fill="#46474b"/><rect x="235.52" y="286.8" width="0.6" height="1.8" fill="#46474b"/><rect x="240.86" y="286.8" width="0.6" height="1.8" fill="#46474b"/><rect x="246.20" y="286.8" width="0.6" height="1.8" fill="#46474b"/><rect x="251.54" y="286.8" width="0.6" height="1.8" fill="#46474b"/><rect x="256.88" y="286.8" width="0.6" height="1.8" fill="#46474b"/><rect x="262.22" y="286.8" width="0.6" height="1.8" fill="#46474b"/><rect x="267.56" y="286.8" width="0.6" height="1.8" fill="#46474b"/><rect x="272.90" y="281.8" width="0.7" height="7.2" fill="#4a4b4f"/><rect x="278.24" y="286.8" width="0.6" height="1.8" fill="#46474b"/><rect x="283.58" y="286.8" width="0.6" height="1.8" fill="#46474b"/><rect x="288.92" y="286.8" width="0.6" height="1.8" fill="#46474b"/><rect x="294.26" y="286.8" width="0.6" height="1.8" fill="#46474b"/><rect x="299.60" y="286.8" width="0.6" height="1.8" fill="#46474b"/><rect x="304.94" y="286.8" width="0.6" height="1.8" fill="#46474b"/><rect x="310.28" y="286.8" width="0.6" height="1.8" fill="#46474b"/><rect x="315.62" y="286.8" width="0.6" height="1.8" fill="#46474b"/><rect x="320.96" y="286.8" width="0.6" height="1.8" fill="#46474b"/><rect x="326.30" y="281.8" width="0.7" height="7.2" fill="#4a4b4f"/><rect x="331.64" y="286.8" width="0.6" height="1.8" fill="#46474b"/><rect x="336.98" y="286.8" width="0.6" height="1.8" fill="#46474b"/><rect x="342.32" y="286.8" width="0.6" height="1.8" fill="#46474b"/><rect x="347.66" y="286.8" width="0.6" height="1.8" fill="#46474b"/><rect x="353.00" y="286.8" width="0.6" height="1.8" fill="#46474b"/><rect x="358.34" y="286.8" width="0.6" height="1.8" fill="#46474b"/><rect x="363.68" y="286.8" width="0.6" height="1.8" fill="#46474b"/><rect x="369.02" y="286.8" width="0.6" height="1.8" fill="#46474b"/><rect x="374.36" y="286.8" width="0.6" height="1.8" fill="#46474b"/><rect x="379.70" y="281.8" width="0.7" height="7.2" fill="#4a4b4f"/><rect x="385.04" y="286.8" width="0.6" height="1.8" fill="#46474b"/><rect x="390.38" y="286.8" width="0.6" height="1.8" fill="#46474b"/><rect x="395.72" y="286.8" width="0.6" height="1.8" fill="#46474b"/><rect x="401.06" y="286.8" width="0.6" height="1.8" fill="#46474b"/><rect x="406.40" y="286.8" width="0.6" height="1.8" fill="#46474b"/><rect x="411.74" y="286.8" width="0.6" height="1.8" fill="#46474b"/><rect x="417.08" y="286.8" width="0.6" height="1.8" fill="#46474b"/><rect x="422.42" y="286.8" width="0.6" height="1.8" fill="#46474b"/><rect x="427.76" y="286.8" width="0.6" height="1.8" fill="#46474b"/><rect x="433.10" y="281.8" width="0.7" height="7.2" fill="#4a4b4f"/><rect x="438.44" y="286.8" width="0.6" height="1.8" fill="#46474b"/><rect x="443.78" y="286.8" width="0.6" height="1.8" fill="#46474b"/><rect x="449.12" y="286.8" width="0.6" height="1.8" fill="#46474b"/><rect x="454.46" y="286.8" width="0.6" height="1.8" fill="#46474b"/><rect x="459.80" y="286.8" width="0.6" height="1.8" fill="#46474b"/><rect x="465.14" y="286.8" width="0.6" height="1.8" fill="#46474b"/><rect x="470.48" y="286.8" width="0.6" height="1.8" fill="#46474b"/><rect x="475.82" y="286.8" width="0.6" height="1.8" fill="#46474b"/><rect x="481.16" y="286.8" width="0.6" height="1.8" fill="#46474b"/><rect x="486.50" y="281.8" width="0.7" height="7.2" fill="#4a4b4f"/><rect x="491.84" y="286.8" width="0.6" height="1.8" fill="#46474b"/><rect x="497.18" y="286.8" width="0.6" height="1.8" fill="#46474b"/><rect x="502.52" y="286.8" width="0.6" height="1.8" fill="#46474b"/><rect x="507.86" y="286.8" width="0.6" height="1.8" fill="#46474b"/><rect x="513.20" y="286.8" width="0.6" height="1.8" fill="#46474b"/><rect x="518.54" y="286.8" width="0.6" height="1.8" fill="#46474b"/><rect x="523.88" y="286.8" width="0.6" height="1.8" fill="#46474b"/><rect x="529.22" y="286.8" width="0.6" height="1.8" fill="#46474b"/><rect x="534.56" y="286.8" width="0.6" height="1.8" fill="#46474b"/><rect x="539.90" y="281.8" width="0.7" height="7.2" fill="#4a4b4f"/><rect x="545.24" y="286.8" width="0.6" height="1.8" fill="#46474b"/><rect x="550.58" y="286.8" width="0.6" height="1.8" fill="#46474b"/><rect x="555.92" y="286.8" width="0.6" height="1.8" fill="#46474b"/><rect x="561.26" y="286.8" width="0.6" height="1.8" fill="#46474b"/><rect x="566.60" y="286.8" width="0.6" height="1.8" fill="#46474b"/><rect x="571.94" y="286.8" width="0.6" height="1.8" fill="#46474b"/><rect x="577.28" y="286.8" width="0.6" height="1.8" fill="#46474b"/><text x="221.30" y="285.4" font-size="6.2" fill="#8e9094" font-family="Liberation Sans">1s</text><text x="274.70" y="285.4" font-size="6.2" fill="#8e9094" font-family="Liberation Sans">2s</text><text x="328.10" y="285.4" font-size="6.2" fill="#8e9094" font-family="Liberation Sans">3s</text><text x="381.50" y="285.4" font-size="6.2" fill="#8e9094" font-family="Liberation Sans">4s</text><text x="434.90" y="285.4" font-size="6.2" fill="#8e9094" font-family="Liberation Sans">5s</text><text x="488.30" y="285.4" font-size="6.2" fill="#8e9094" font-family="Liberation Sans">6s</text><text x="541.70" y="285.4" font-size="6.2" fill="#8e9094" font-family="Liberation Sans">7s</text></svg>
<svg class="a" style="left:584.5px;top:279px" width="8" height="8" viewBox="0 0 8 8"><path d="M0.6 0.6L7.4 7.4M7.4 0.6L0.6 7.4" stroke="#b9bbbe" stroke-width="1"/></svg>
<svg class="a" style="left:8px;top:299.8px" width="9" height="6.2" viewBox="0 0 9 6.2"><rect width="9" height="6.2" fill="#2f7de1"/><path d="M2 5L3.6 3.2L5 4.4L6.2 3.4L7.4 5Z" fill="#16335c"/></svg>
<div class="t" style="left:22.4px;top:299.69px;font-size:7.45px;color:#c4c5c8;font-weight:400;">Slide BG Animation</div>
<svg class="a" style="left:142px;top:299.4px" width="9" height="7" viewBox="0 0 9 7"><path d="M0.5 0.6H3.2L3.9 1.4H8.4V6.5H0.5Z" fill="none" stroke="#8a8c90" stroke-width="0.9"/><rect x="2.2" y="2.8" width="4.8" height="2.6" fill="#8a8c90"/></svg>
<div class="a" style="left:164.8px;top:298.5px;width:53.6px;height:8.6px;background:#5c6069;border-radius:1px"></div>
<div class="t" style="left:191.6px;transform:translateX(-50%);top:300.05px;font-size:5.85px;color:#eceef0;font-weight:400;">1000</div>
<svg class="a" style="left:13.9px;top:318.7px" width="8" height="5" viewBox="0 0 8 5"><path d="M0 5L2.6 1.2L4 2.8L5.4 0.4L8 5Z" fill="#2f7de1"/></svg>
<div class="t" style="left:27.8px;top:319.19px;font-size:7.45px;color:#c4c5c8;font-weight:400;">After Car Image</div>
<svg class="a" style="left:105.9px;top:317.5px" width="12" height="8" viewBox="0 0 12 8"><rect x="0.45" y="0.9" width="5.2" height="6.4" rx="0.5" fill="none" stroke="#b9bbbe" stroke-width="0.8"/><rect x="2.6" y="0.3" width="0.8" height="7.6" fill="#b9bbbe"/><text x="6.6" y="6.2" font-size="5.4" font-weight="700" fill="#d0d1d4" font-family="Liberation Sans">A</text></svg>
<svg class="a" style="left:131.3px;top:318.5px" width="7" height="6" viewBox="0 0 7 6"><path d="M0.3 3C1.5 1 5.5 1 6.7 3C5.5 5 1.5 5 0.3 3Z" fill="#b9bbbe"/><circle cx="3.5" cy="3" r="1" fill="#212225"/><path d="M0.6 0.4L6.4 5.6" stroke="#212225" stroke-width="1.2"/><path d="M0.6 0.4L6.4 5.6" stroke="#b9bbbe" stroke-width="0.6"/></svg>
<svg class="a" style="left:143.3px;top:318.5px" width="9" height="6" viewBox="0 0 9 6"><path d="M0 3H6.6M4.4 0.9L6.6 3L4.4 5.1M8.3 0V6" fill="none" stroke="#a7a9ad" stroke-width="0.9"/></svg>
<svg class="a" style="left:14.6px;top:337.0px" width="6" height="7" viewBox="0 0 6 7"><path d="M0 0H6V1.4H3.7V7H2.3V1.4H0Z" fill="#2f7de1"/></svg>
<div class="t" style="left:27.8px;top:338.09px;font-size:7.45px;color:#c4c5c8;font-weight:400;">After Text</div>
<svg class="a" style="left:105.9px;top:336.4px" width="12" height="8" viewBox="0 0 12 8"><rect x="0.45" y="0.9" width="5.2" height="6.4" rx="0.5" fill="none" stroke="#b9bbbe" stroke-width="0.8"/><rect x="2.6" y="0.3" width="0.8" height="7.6" fill="#b9bbbe"/><text x="6.6" y="6.2" font-size="5.4" font-weight="700" fill="#d0d1d4" font-family="Liberation Sans">A</text></svg>
<svg class="a" style="left:131.3px;top:337.4px" width="7" height="6" viewBox="0 0 7 6"><path d="M0.3 3C1.5 1 5.5 1 6.7 3C5.5 5 1.5 5 0.3 3Z" fill="#b9bbbe"/><circle cx="3.5" cy="3" r="1" fill="#212225"/><path d="M0.6 0.4L6.4 5.6" stroke="#212225" stroke-width="1.2"/><path d="M0.6 0.4L6.4 5.6" stroke="#b9bbbe" stroke-width="0.6"/></svg>
<svg class="a" style="left:143.3px;top:337.4px" width="9" height="6" viewBox="0 0 9 6"><path d="M0 3H6.6M4.4 0.9L6.6 3L4.4 5.1M8.3 0V6" fill="none" stroke="#a7a9ad" stroke-width="0.9"/></svg>
<svg class="a" style="left:13.9px;top:356.99999999999994px" width="8" height="5" viewBox="0 0 8 5"><path d="M0 5L2.6 1.2L4 2.8L5.4 0.4L8 5Z" fill="#2f7de1"/></svg>
<div class="t" style="left:27.8px;top:357.49px;font-size:7.45px;color:#c4c5c8;font-weight:400;">Before Car Image</div>
<svg class="a" style="left:105.6px;top:355.79999999999995px" width="12" height="8" viewBox="0 0 12 8"><text x="0" y="6.2" font-size="5.4" font-weight="700" fill="#e0e1e3" font-family="Liberation Sans">B</text><rect x="4.6" y="0.9" width="5.2" height="6.4" rx="0.5" fill="none" stroke="#b9bbbe" stroke-width="0.8"/><rect x="6.8" y="0.3" width="0.8" height="7.6" fill="#b9bbbe"/></svg>
<svg class="a" style="left:143.3px;top:356.79999999999995px" width="9" height="6" viewBox="0 0 9 6"><path d="M0 3H6.6M4.4 0.9L6.6 3L4.4 5.1M8.3 0V6" fill="none" stroke="#a7a9ad" stroke-width="0.9"/></svg>
<svg class="a" style="left:14.6px;top:376.3px" width="6" height="7" viewBox="0 0 6 7"><path d="M0 0H6V1.4H3.7V7H2.3V1.4H0Z" fill="#2f7de1"/></svg>
<div class="t" style="left:27.8px;top:377.77px;font-size:7.0px;color:#ffffff;font-weight:700;">Before Text</div>
<svg class="a" style="left:105.6px;top:375.7px" width="12" height="8" viewBox="0 0 12 8"><text x="0" y="6.2" font-size="5.4" font-weight="700" fill="#e0e1e3" font-family="Liberation Sans">B</text><rect x="4.6" y="0.9" width="5.2" height="6.4" rx="0.5" fill="none" stroke="#b9bbbe" stroke-width="0.8"/><rect x="6.8" y="0.3" width="0.8" height="7.6" fill="#b9bbbe"/></svg>
<svg class="a" style="left:143.3px;top:376.7px" width="9" height="6" viewBox="0 0 9 6"><path d="M0 3H6.6M4.4 0.9L6.6 3L4.4 5.1M8.3 0V6" fill="none" stroke="#a7a9ad" stroke-width="0.9"/></svg>
<div class="a" style="left:164.8px;top:317.7px;width:16.3px;height:8.8px;background:#5c6069;border-radius:1px"></div>
<div class="t" style="left:173px;transform:translateX(-50%);top:319.45px;font-size:5.85px;color:#eceef0;font-weight:400;">300</div>
<div class="a" style="left:164.8px;top:336.6px;width:16.3px;height:8.8px;background:#5c6069;border-radius:1px"></div>
<div class="t" style="left:173px;transform:translateX(-50%);top:338.35px;font-size:5.85px;color:#eceef0;font-weight:400;">300</div>
<div class="a" style="left:192.1px;top:356.4px;width:80px;height:8.2px;background:#5c6069;border-radius:1px"></div>
<div class="t" style="left:232.1px;transform:translateX(-50%);top:357.95px;font-size:5.85px;color:#eceef0;font-weight:400;">1500</div>
<div class="a" style="left:165.1px;top:375.4px;width:53.6px;height:8.6px;background:#186ed7;border-radius:1px"></div>
<div class="t" style="left:191.9px;transform:translateX(-50%);top:377.05px;font-size:5.85px;color:#ffffff;font-weight:400;">1000</div>
<div class="a" style="left:0px;top:413.2px;width:39.7px;height:4.8px;background:#6a6e72;border-radius:2.4px"></div>
</body></html>
